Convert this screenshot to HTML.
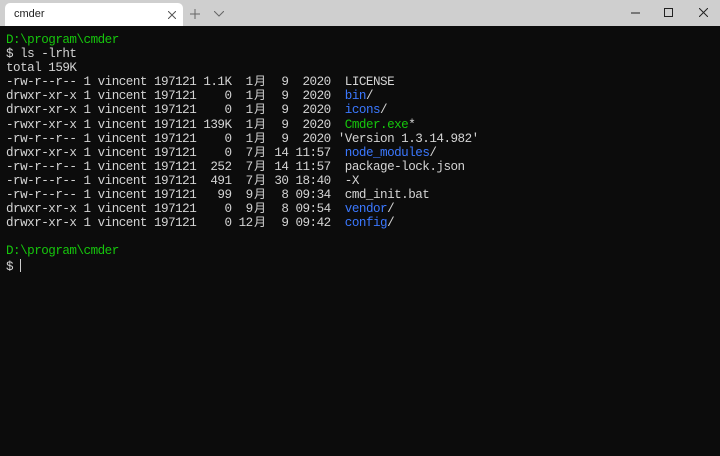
<!DOCTYPE html>
<html><head><meta charset="utf-8"><style>
*{margin:0;padding:0;box-sizing:border-box}
body{width:720px;height:456px;background:#0c0c0c;overflow:hidden;font-family:"Liberation Sans",sans-serif}
.bar{position:absolute;left:0;top:0;width:720px;height:26px;background:#cfcfcf}
.tab{position:absolute;left:5px;top:3px;width:178px;height:23px;background:#fff;border-radius:5px 5px 0 0}
.tab span{position:absolute;left:9px;top:5px;font-size:11px;color:#222}
.term{position:absolute;left:6px;top:33px;font-family:"Liberation Mono","Noto Sans CJK SC",monospace;font-size:12.6px;letter-spacing:-0.51px;line-height:14.1px;color:#d4d4d4;white-space:pre}
.g{color:#16c60c}.b{color:#3b78ff}
.m{display:inline-block;width:14.6px;text-align:center;letter-spacing:0;font-size:12px}
.cur{display:inline-block;width:1px;height:13px;background:#ccc;vertical-align:-2px}
</style></head><body>
<div class="bar">
<div class="tab"><span>cmder</span>
<svg style="position:absolute;left:163px;top:8px" width="8" height="8"><path d="M0 0L8 8M8 0L0 8" stroke="#555" stroke-width="1"/></svg></div>
<svg style="position:absolute;left:190px;top:9px" width="10" height="10"><path d="M5 0V10M0 5H10" stroke="#666" stroke-width="1"/></svg>
<svg style="position:absolute;left:214px;top:11px" width="10" height="6"><path d="M0 0L5 5L10 0" stroke="#666" fill="none" stroke-width="1"/></svg>
<svg style="position:absolute;left:631px;top:12px" width="9" height="2"><path d="M0 1H9" stroke="#222"/></svg>
<svg style="position:absolute;left:664px;top:8px" width="9" height="9"><rect x=".5" y=".5" width="8" height="8" stroke="#222" fill="none"/></svg>
<svg style="position:absolute;left:699px;top:8px" width="9" height="9"><path d="M0 0L9 9M9 0L0 9" stroke="#222"/></svg>
</div>
<div class="term"><span class="g">D:\program\cmder</span>
$ ls -lrht
total 159K
-rw-r--r-- 1 vincent 197121 1.1K  1<span class="m">月</span>  9  2020  LICENSE
drwxr-xr-x 1 vincent 197121    0  1<span class="m">月</span>  9  2020  <span class="b">bin</span>/
drwxr-xr-x 1 vincent 197121    0  1<span class="m">月</span>  9  2020  <span class="b">icons</span>/
-rwxr-xr-x 1 vincent 197121 139K  1<span class="m">月</span>  9  2020  <span class="g">Cmder.exe</span>*
-rw-r--r-- 1 vincent 197121    0  1<span class="m">月</span>  9  2020 'Version 1.3.14.982'
drwxr-xr-x 1 vincent 197121    0  7<span class="m">月</span> 14 11:57  <span class="b">node_modules</span>/
-rw-r--r-- 1 vincent 197121  252  7<span class="m">月</span> 14 11:57  package-lock.json
-rw-r--r-- 1 vincent 197121  491  7<span class="m">月</span> 30 18:40  -X
-rw-r--r-- 1 vincent 197121   99  9<span class="m">月</span>  8 09:34  cmd_init.bat
drwxr-xr-x 1 vincent 197121    0  9<span class="m">月</span>  8 09:54  <span class="b">vendor</span>/
drwxr-xr-x 1 vincent 197121    0 12<span class="m">月</span>  9 09:42  <span class="b">config</span>/

<span class="g">D:\program\cmder</span>
$ <span class="cur"></span></div>
</body></html>
